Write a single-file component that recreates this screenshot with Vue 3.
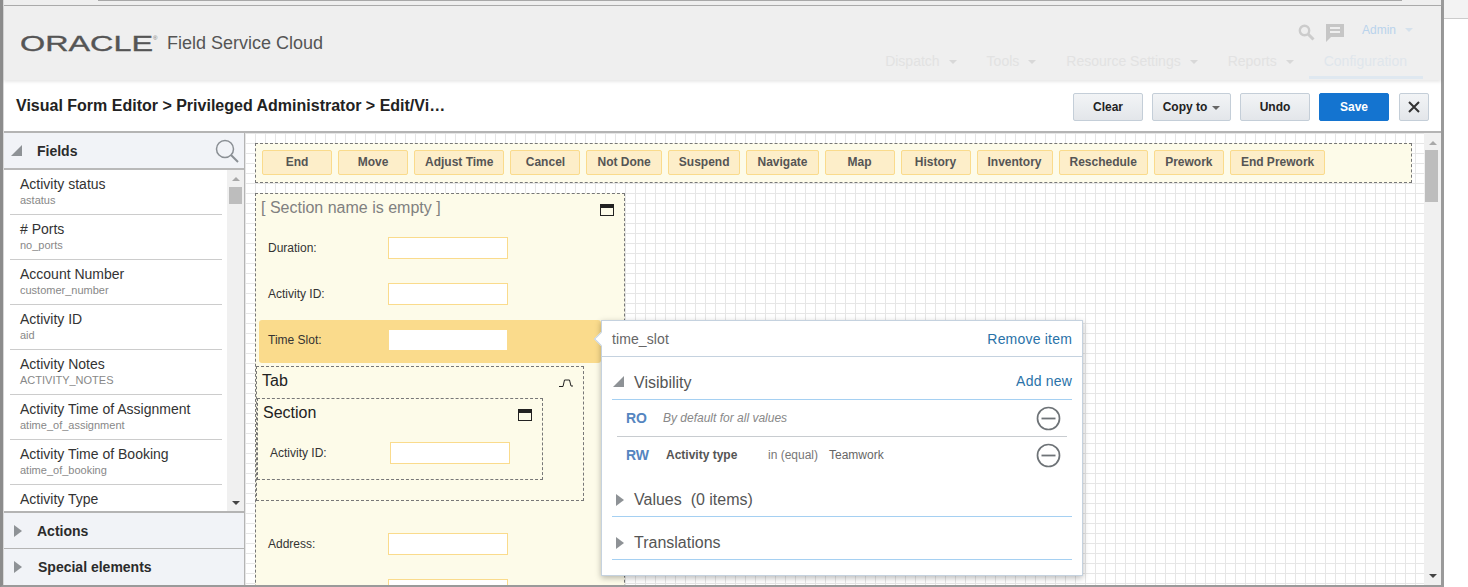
<script setup>
const buttons = ['End','Move','Adjust Time','Cancel','Not Done','Suspend','Navigate','Map','History','Inventory','Reschedule','Prework','End Prework']
const fields = [
  ['Activity status','astatus'],['# Ports','no_ports'],['Account Number','customer_number'],['Activity ID','aid'],
  ['Activity Notes','ACTIVITY_NOTES'],['Activity Time of Assignment','atime_of_assignment'],['Activity Time of Booking','atime_of_booking'],['Activity Type','ACTIVITY_TYPE']
]
const nav = ['Dispatch','Tools','Resource Settings','Reports']
</script>

<template>
  <div class="page">
    <div class="win">
      <div class="topstrip"><i class="topbar"></i></div>
      <header class="head">
        <div class="brand">
          <svg class="logo" width="140" height="24" viewBox="0 0 140 24">
            <text x="-1" y="20" font-family="Liberation Sans" font-size="22.5" textLength="133" lengthAdjust="spacingAndGlyphs" fill="#555" stroke="#555" stroke-width=".35">ORACLE</text>
            <text x="132" y="9" font-family="Liberation Sans" font-size="6" fill="#777">®</text>
          </svg>
          <span class="product">Field Service Cloud</span>
        </div>
        <div class="headright">
          <div class="util">
            <svg width="17" height="17" viewBox="0 0 17 17"><circle cx="6.5" cy="6.5" r="4.7" fill="none" stroke="#ccc" stroke-width="2.4"/><path d="M10 10l5.5 5.5" stroke="#ccc" stroke-width="3"/></svg>
            <svg class="chat" width="19" height="19" viewBox="0 0 19 19"><path d="M0 1h18v13H5l-5 5z" fill="#c6c6c6"/><path d="M4 5h10M4 9h10" stroke="#efefef" stroke-width="2"/></svg>
            <span class="admin">Admin</span><i class="caret admincaret"></i>
          </div>
          <nav class="nav">
            <span v-for="n in nav" :key="n" class="navitem">{{ n }}<i class="caret"></i></span>
            <span class="navitem active">Configuration</span>
          </nav>
        </div>
      </header>

      <div class="titlebar">
        <h1 class="title">Visual Form Editor &gt; Privileged Administrator &gt; Edit/Vi…</h1>
        <div class="actions">
          <button class="btn w70">Clear</button>
          <button class="btn copy">Copy to<i class="caret dark"></i></button>
          <button class="btn w70">Undo</button>
          <button class="btn w70 save">Save</button>
          <button class="btn close">
            <svg width="12" height="12" viewBox="0 0 12 12"><path d="M1 1l10 10M11 1L1 11" stroke="#333" stroke-width="2"/></svg>
          </button>
        </div>
      </div>

      <div class="body">
        <aside class="left">
          <div class="acc fieldshead">
            <svg class="tri" width="11" height="11" viewBox="0 0 11 11"><path d="M11 0v11H0z" fill="#8e9296"/></svg>
            <span>Fields</span>
            <svg class="mag" width="24" height="24" viewBox="0 0 24 24"><circle cx="10" cy="10" r="8.5" fill="none" stroke="#8a8f94" stroke-width="1.5"/><path d="M16 16l7 7" stroke="#8a8f94" stroke-width="2"/></svg>
          </div>
          <div class="listwrap">
            <ul class="list">
              <li v-for="f in fields" :key="f[1]" class="item">
                <div class="fname">{{ f[0] }}</div>
                <div class="fsub">{{ f[1] }}</div>
              </li>
            </ul>
            <div class="sb small">
              <i class="up"></i><i class="thumb"></i><i class="down"></i>
            </div>
          </div>
          <div class="acc closed">
            <svg class="tri2" width="8" height="12" viewBox="0 0 8 12"><path d="M0 0l8 6-8 6z" fill="#8e9296"/></svg>
            <span>Actions</span>
          </div>
          <div class="acc closed last">
            <svg class="tri2" width="8" height="12" viewBox="0 0 8 12"><path d="M0 0l8 6-8 6z" fill="#8e9296"/></svg>
            <span class="special">Special elements</span>
          </div>
        </aside>

        <main class="canvas">
          <div class="toolbar">
            <span v-for="b in buttons" :key="b" class="tbtn">{{ b }}</span>
          </div>

          <section class="sect outer">
            <div class="shead"><span class="empty">[ Section name is empty ]</span><svg class="sicon" width="14" height="12" viewBox="0 0 14 12"><rect x=".5" y=".5" width="13" height="11" fill="none" stroke="#222"/><rect width="14" height="4" fill="#222"/></svg></div>
            <div class="row"><label>Duration:</label><span class="inp"></span></div>
            <div class="row"><label>Activity ID:</label><span class="inp"></span></div>
            <div class="row selected">
              <label>Time Slot:</label><span class="inp"></span>
              <div class="pop">
                <i class="notch"></i>
                <div class="pophead"><span class="key">time_slot</span><a class="lnk">Remove item</a></div>
                <div class="pgroup vis">
                  <svg width="11" height="11" viewBox="0 0 11 11"><path d="M11 0v11H0z" fill="#8e9296"/></svg>
                  <span class="gname">Visibility</span><a class="lnk">Add new</a>
                </div>
                <div class="vrow sep">
                  <b class="mode">RO</b><em>By default for all values</em>
                  <svg class="minus" width="25" height="25" viewBox="0 0 25 25"><circle cx="12.5" cy="12.5" r="11" fill="none" stroke="#6e7377" stroke-width="1.7"/><path d="M5.5 12.5h14" stroke="#6e7377" stroke-width="1.8"/></svg>
                </div>
                <div class="vrow rw">
                  <b class="mode">RW</b><b class="attr">Activity type</b><span class="op">in (equal)</span><span class="val">Teamwork</span>
                  <svg class="minus" width="25" height="25" viewBox="0 0 25 25"><circle cx="12.5" cy="12.5" r="11" fill="none" stroke="#6e7377" stroke-width="1.7"/><path d="M5.5 12.5h14" stroke="#6e7377" stroke-width="1.8"/></svg>
                </div>
                <div class="pgroup shut">
                  <svg width="8" height="12" viewBox="0 0 8 12"><path d="M0 0l8 6-8 6z" fill="#8e9296"/></svg>
                  <span class="gname">Values&nbsp;&nbsp;(0 items)</span>
                </div>
                <div class="pgroup shut">
                  <svg width="8" height="12" viewBox="0 0 8 12"><path d="M0 0l8 6-8 6z" fill="#8e9296"/></svg>
                  <span class="gname">Translations</span>
                </div>
              </div>
            </div>

            <div class="tabbox">
              <div class="shead tabhead"><span class="dark16">Tab</span><svg class="sicon" width="14" height="8" viewBox="0 0 14 8"><path d="M0 7.5h4L5.5 1h5L12 7h2" fill="none" stroke="#222"/></svg></div>
              <section class="sect inner">
                <div class="shead"><span class="dark16">Section</span><svg class="sicon" width="14" height="12" viewBox="0 0 14 12"><rect x=".5" y=".5" width="13" height="11" fill="none" stroke="#222"/><rect width="14" height="4" fill="#222"/></svg></div>
                <div class="row"><label>Activity ID:</label><span class="inp"></span></div>
              </section>
            </div>

            <div class="row addr"><label>Address:</label><span class="inp"></span></div>
            <div class="row"><label></label><span class="inp"></span></div>
          </section>
        </main>

        <div class="sb big">
          <i class="up"></i><i class="thumb"></i><i class="down"></i>
        </div>
      </div>
    </div>
    <div class="rest"><div class="reststrip"></div></div>
  </div>
</template>

<style>
html, body { margin: 0; background: #fff; overflow: hidden; }
</style>

<style scoped>
* { box-sizing: border-box; }
.page { display: flex; width: 1468px; height: 587px; font-family: "Liberation Sans", Arial, sans-serif; background: #fff; overflow: hidden; }
.win { width: 1444px; height: 587px; display: flex; flex-direction: column; background: #fff; border-left: 3px solid #8c8c8c; border-right: 3px solid #9a9a9a; border-bottom: 2px solid #9a9a9a; box-shadow: inset 1px 0 0 #d8d8d8; padding-left: 1px; position: relative; }
.rest { flex: 1; background: #fff; }
.reststrip { height: 19px; background: #f3f3f3; border-bottom: 1px solid #ccc; }

.topstrip { height: 5px; flex: none; background: #efefef; }
.topbar { display: block; height: 1px; margin-left: 94px; width: 1304px; background: #a8a8a8; }
.head { height: 75px; background: #efefef; border-top: 1px solid #aaa; display: flex; justify-content: space-between; box-shadow: 0 2px 3px rgba(0,0,0,.09); position: relative; z-index: 1; flex: none; }
.brand { display: flex; align-items: center; padding: 0 0 0 17px; height: 74px; }
.logo { display: block; }
.product { font-size: 18px; color: #555; margin-left: 6px; margin-top: 1px; }
.headright { display: flex; flex-direction: column; align-items: flex-end; padding-right: 18px; }
.util { height: 39px; display: flex; align-items: center; padding-top: 13px; padding-right: 10px; }
.chat { margin-left: 11px; margin-right: 17px; }
.admin { font-size: 12px; color: #b9d3ec; margin-top: -4px; }
.caret { display: inline-block; width: 0; height: 0; border-left: 4px solid transparent; border-right: 4px solid transparent; border-top: 4px solid #d8d8d8; margin-left: 9px; vertical-align: middle; }
.admincaret { border-top-color: #d5e1ec; margin-left: 9px; margin-top: -4px; }
.nav { display: flex; height: 34px; }
.navitem { padding: 0 15px; font-size: 14px; color: #e2e2e2; line-height: 33px; white-space: nowrap; }
.active { border-bottom: 3px solid #dfe8f0; color: #dfe6ec; padding: 0 16px 0 15px; }

.titlebar { height: 53px; flex: none; display: flex; align-items: center; justify-content: space-between; background: #fff; border-bottom: 2px solid #b4b4b4; padding: 0 12px 0 12px; }
.title { margin: 0; font-size: 16px; font-weight: 700; color: #222; }
.actions { display: flex; gap: 9px; margin-top: 3px; }
.btn { height: 28px; font: 700 12px "Liberation Sans", Arial, sans-serif; color: #222; background: linear-gradient(#f2f4f6, #e3e6ea); border: 1px solid #c4ced8; border-radius: 2px; padding: 0; }
.w70 { width: 70px; }
.copy { width: 79px; }
.copy .caret { border-top-color: #666; margin-left: 5px; }
.save { background: #1474d0; border-color: #1474d0; color: #fff; }
.close { width: 30px; margin-left: 1px; display: flex; align-items: center; justify-content: center; }

.body { flex: 1; min-height: 0; display: flex; }
.left { width: 241px; flex: none; border-right: 1px solid #b4b4b4; display: flex; flex-direction: column; background: #fff; }
.acc { display: flex; align-items: center; background: #f1f3f7; font-size: 14px; font-weight: 700; color: #2b2b2b; flex: none; position: relative; }
.fieldshead { height: 37px; border-bottom: 2px solid #b9b9b9; padding-left: 7px; }
.fieldshead span { margin-left: 15px; }
.mag { position: absolute; right: 5px; top: 6px; }
.closed { height: 36px; border-bottom: 1px solid #b4b4b4; padding-left: 10px; }
.closed span { margin-left: 15px; }
.closed .special { margin-left: 16px; }
.last { flex: 1; border-bottom: 0; }
.listwrap { height: 343px; flex: none; display: flex; border-bottom: 2px solid #b4b4b4; overflow: hidden; }
.list { list-style: none; margin: 0; padding: 0 0 0 6px; flex: 1; min-width: 0; height: 341px; overflow: hidden; }
.item { height: 45px; border-bottom: 1px solid #ccc; padding: 6px 0 0 10px; margin-right: 5px; }
.fname { font-size: 14px; color: #333; line-height: 17px; }
.fsub { font-size: 11px; color: #888; line-height: 15px; }

.sb { background: #f0f0f0; position: relative; flex: none; }
.sb i { position: absolute; display: block; }
.sb .up { width: 0; height: 0; border-left: 4px solid transparent; border-right: 4px solid transparent; border-bottom: 4px solid #a8a8a8; }
.sb .down { width: 0; height: 0; border-left: 4px solid transparent; border-right: 4px solid transparent; border-top: 4px solid #444; }
.sb .thumb { background: #bdbdbd; }
.small { width: 17px; }
.small .up { left: 5px; top: 7px; }
.small .down { left: 5px; top: 331px; }
.small .thumb { left: 2px; top: 17px; width: 13px; height: 17px; }
.big { width: 17px; }
.big .up { left: 5px; top: 8px; }
.big .down { left: 5px; top: 441px; }
.big .thumb { left: 1px; top: 17px; width: 13px; height: 52px; }

.canvas { flex: 1; min-width: 0; overflow: hidden; padding: 10px 0 0 10px; background-color: #fff; background-image: linear-gradient(#e6e6e6 1px, transparent 1px), linear-gradient(90deg, #e6e6e6 1px, transparent 1px); background-size: 10px 10px; position: relative; }
.toolbar { width: 1157px; height: 40px; border: 1px dashed #777; background: #fdfbe9; display: flex; gap: 6px; padding: 6px 0 0 6px; }
.tbtn { height: 25px; min-width: 70px; padding: 0 10px; border: 1px solid #fadb8c; border-radius: 2px; background: #fdeec9; font-size: 12px; font-weight: 700; color: #555; line-height: 23px; text-align: center; white-space: nowrap; }

.sect { border: 1px dashed #777; background: #fdfbe9; }
.outer { width: 370px; margin-top: 10px; height: 460px; }
.shead { height: 31px; display: flex; align-items: center; justify-content: space-between; padding: 0 10px 0 5px; font-size: 16px; }
.empty { color: #808080; margin-top: -3px; }
.dark16 { color: #222; margin-top: -4px; }
.row { height: 46px; display: flex; align-items: center; padding-left: 12px; font-size: 12px; color: #333; }
.row label { width: 120px; flex: none; }
.inp { width: 120px; height: 22px; background: #fff; border: 1px solid #fadb8c; display: block; }
.selected { height: 43px; margin: 3px 0 3px 3px; width: 342px; background: #fadb8c; border-radius: 3px; padding: 0 0 3px 9px; position: relative; }
.selected label { width: 121px; }
.selected .inp { width: 118px; height: 20px; border: 0; }

.tabbox { width: 328px; height: 135px; border: 1px dashed #777; }
.inner { width: 286px; height: 82px; margin: 0; }
.addr { margin-top: 20px; }

.pop { position: absolute; left: 342px; top: 0; width: 482px; height: 256px; background: #fff; border: 1px solid #c5d2df; box-shadow: 0 2px 6px rgba(0,0,0,.28); z-index: 5; padding: 0 10px; color: #555; }
.notch { position: absolute; left: -6px; top: 13px; width: 10px; height: 10px; background: #fff; border-left: 1px solid #c5d2df; border-bottom: 1px solid #c5d2df; transform: rotate(45deg); }
.pophead { height: 36px; margin: 0 -10px; padding: 0 10px; border-bottom: 1px solid #c5d2df; display: flex; align-items: center; justify-content: space-between; font-size: 14px; position: relative; }
.key { color: #666; letter-spacing: .1px; }
.lnk { color: #2a72a8; font-size: 14px; letter-spacing: .2px; }
.pgroup { display: flex; align-items: center; border-bottom: 1px solid #a5d0f2; height: 43px; font-size: 16px; position: relative; }
.vis { padding-left: 1px; padding-top: 7px; }
.vis svg { margin-top: -1px; }
.vis .gname { margin-left: 10px; flex: 1; margin-top: 2px; }
.vis .lnk { margin-top: -2px; }
.shut { padding-left: 4px; padding-top: 9px; }
.shut .gname { margin-left: 10px; }
.vrow { height: 37px; display: flex; align-items: center; margin: 0 5px; padding-left: 9px; font-size: 12px; position: relative; }
.rw { padding-bottom: 2px; }
.sep { border-bottom: 1px solid #c8ccd0; }
.mode { font-size: 14px; color: #5585c0; width: 37px; }
.vrow em { color: #888; }
.attr { width: 102px; margin-left: 3px; color: #555; }
.op { color: #777; width: 61px; }
.val { color: #666; }
.minus { position: absolute; right: 6px; top: 6px; }
</style>
